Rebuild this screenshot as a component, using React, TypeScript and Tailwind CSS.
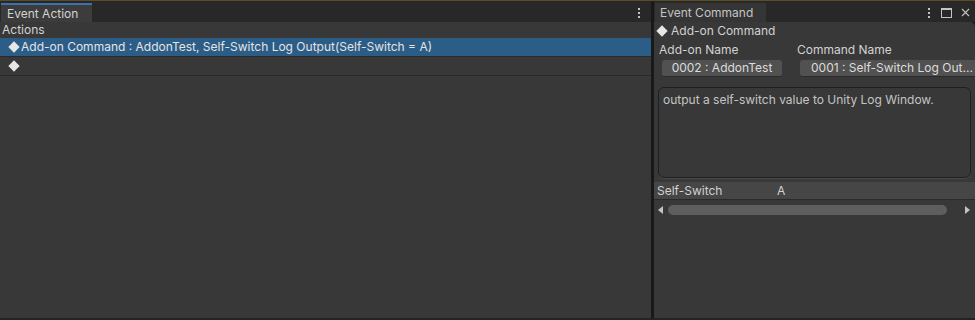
import { X } from "lucide-react"

const Diamond = () => (
  <span className="inline-block w-[8px] h-[8px] bg-[#e6e6e6] rotate-45 mx-[3px]" />
)

const Kebab = () => (
  <svg width="4" height="12" viewBox="0 0 4 12" className="fill-[#c4c4c4]">
    <rect x="1" y="1" width="2" height="2" />
    <rect x="1" y="5" width="2" height="2" />
    <rect x="1" y="9" width="2" height="2" />
  </svg>
)

export default function App() {
  return (
    <div
      className="w-[975px] h-[320px] bg-[#191919] flex flex-col text-[12px] text-[#c4c4c4] overflow-hidden"
      style={{ fontFamily: "Inter, 'Noto Sans', sans-serif" }}
    >
      <div className="h-[1px] bg-[#5a4c25] shrink-0" />
      <div className="flex flex-1 min-h-0">
        {/* left window */}
        <div className="w-[651px] flex flex-col">
          <div className="h-[21px] bg-[#282828] flex items-end justify-between pl-[1px] pr-[10px] shrink-0">
            <div className="w-[91px] h-[19px] bg-[#3c3c3c] border-t-2 border-[#3a72b0] pl-[6px] flex items-center text-[#d2d2d2]">
              Event Action
            </div>
            <div className="self-center pt-[2px]"><Kebab /></div>
          </div>
          <div className="flex-1 bg-[#383838] flex flex-col">
            <div className="h-[16px] pl-[2px] leading-[16px] text-[#d2d2d2]">Actions</div>
            <div className="h-[19px] bg-[#2c5d87] flex items-center pl-[7px] text-[#e4e4e4] border-b border-[#2a2a2a]">
              <Diamond />
              <span>Add-on Command : AddonTest, Self-Switch Log Output(Self-Switch = A)</span>
            </div>
            <div className="h-[19px] flex items-center pl-[7px] border-b border-[#2a2a2a]">
              <Diamond />
            </div>
          </div>
        </div>
        <div className="w-[3px] bg-[#191919]" />
        {/* right window */}
        <div className="flex-1 flex flex-col">
          <div className="h-[21px] bg-[#282828] flex items-end justify-between pl-[1px] pr-[3px] shrink-0">
            <div className="w-[111px] h-[19px] bg-[#353535] pl-[5px] flex items-center text-[#c4c4c4]">
              Event Command
            </div>
            <div className="self-center flex items-center gap-[7px] pt-[2px]">
              <Kebab />
              <span className="w-[11px] h-[10px] border border-[#c4c4c4] border-t-2 ml-[3px]" />
              <X size={13} strokeWidth={2} className="text-[#c4c4c4]" />
            </div>
          </div>
          <div className="flex-1 bg-[#383838] rounded-tr-[5px] flex flex-col">
            <div className="h-[17px] flex items-center pl-[1px]">
              <Diamond />
              <span className="ml-[2px] text-[#d2d2d2]">Add-on Command</span>
            </div>
            <div className="flex pl-[5px] mt-[1px] h-[19px] items-center text-[#d2d2d2]">
              <span className="w-[138px]">Add-on Name</span>
              <span>Command Name</span>
            </div>
            <div className="flex pl-[8px] gap-[18px] h-[19px] items-center">
              <div className="w-[120px] h-[17px] bg-[#515151] rounded-[3px] border-b border-[#2a2a2a] flex items-center justify-center text-[#dcdcdc]">
                0002 : AddonTest
              </div>
              <div className="flex-1 h-[17px] bg-[#515151] rounded-l-[3px] border-b border-[#2a2a2a] flex items-center pl-[11px] text-[#dcdcdc] whitespace-nowrap overflow-hidden">
                0001 : Self-Switch Log Out...
              </div>
            </div>
            <div className="mx-[4px] mt-[9px] h-[91px] border border-[#1f1f1f] rounded-[6px] bg-[#383838] px-[4px] pt-[3px] text-[#c4c4c4] shadow-[0_1px_0_#4a4a4a]">
              output a self-switch value to Unity Log Window.
            </div>
            <div className="mt-[4px] h-[18px] bg-[#464646] flex items-center pl-[3px] text-[#d2d2d2] border-b border-[#2a2a2a]">
              <span className="w-[120px]">Self-Switch</span>
              <span>A</span>
            </div>
            <div className="h-[20px] flex items-center px-[4px] gap-[4px]">
              <svg width="6" height="8" viewBox="0 0 6 8" className="fill-[#c4c4c4]"><path d="M5 0 L0 4 L5 8 Z" /></svg>
              <div className="flex-1 h-[10px] bg-[#5e5e5e] rounded-full mr-[14px]" />
              <svg width="6" height="8" viewBox="0 0 6 8" className="fill-[#c4c4c4]"><path d="M0 0 L5 4 L0 8 Z" /></svg>
            </div>
            <div className="flex-1" />
          </div>
        </div>
      </div>
      <div className="h-[2px] bg-[#232323] shrink-0" />
    </div>
  )
}
